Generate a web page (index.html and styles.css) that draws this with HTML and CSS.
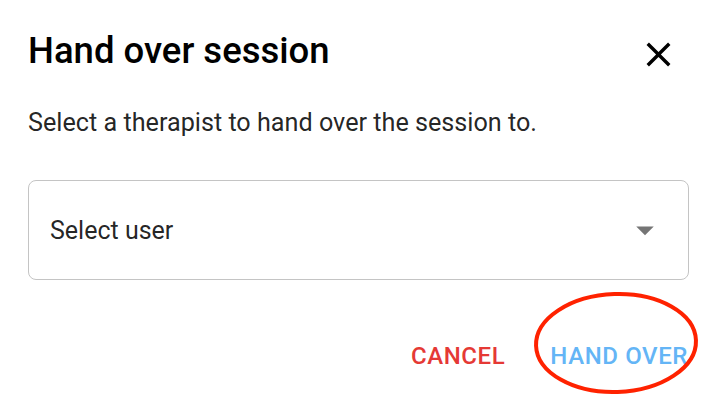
FILE: index.html
```html
<!DOCTYPE html>
<html lang="en">
<head>
    <meta charset="UTF-8">
    <meta name="viewport" content="width=device-width, initial-scale=1.0">
    <title>Hand over session</title>
    <link rel="stylesheet" href="styles.css">
</head>
<body>

    <div class="dialog">
        <!-- Title row -->
        <div class="dialog-header">
            <h2 class="dialog-title">Hand over session</h2>
            <button class="close-button" aria-label="Close">
                <svg width="41" height="41" viewBox="0 0 24 24">
                    <path d="M19 6.41 17.59 5 12 10.59 6.41 5 5 6.41 10.59 12 5 17.59 6.41 19 12 13.41 17.59 19 19 17.59 13.41 12z"/>
                </svg>
            </button>
        </div>

        <!-- Content -->
        <p class="dialog-text">Select a therapist to hand over the session to.</p>

        <div class="select-box">
            <span class="select-value">Select user</span>
            <svg class="select-arrow" width="42" height="42" viewBox="0 0 24 24">
                <path d="M7 10l5 5 5-5z"/>
            </svg>
        </div>

        <!-- Actions -->
        <div class="dialog-actions">
            <button class="text-button cancel">Cancel</button>
            <div class="action-wrap">
                <button class="text-button confirm">Hand over</button>
                <svg class="circle-mark" width="170" height="106" viewBox="0 0 170 106">
                    <ellipse cx="85" cy="53" rx="80" ry="49" transform="rotate(-2 85 53)"/>
                </svg>
            </div>
        </div>
    </div>

</body>
</html>
```

FILE: styles.css
```css
/* Global Styles */
html, body {
    height: 100%;
}

body {
    margin: 0;
    background-color: #ffffff;
    font-family: Roboto, "Noto Sans", Arial, sans-serif;
    color: rgba(0, 0, 0, 0.87);
}

.dialog {
    box-sizing: border-box;
    min-height: 100%;
    padding: 0 27px 0 28px;
}

/* Header */
.dialog-header {
    display: flex;
    justify-content: space-between;
    align-items: center;
    padding-top: 26px;
    height: 50px;
}

.dialog-title {
    margin: 0;
    font-size: 36.5px;
    font-weight: 500;
    line-height: 50px;
    color: #000000;
}

.close-button {
    display: flex;
    padding: 0;
    margin-right: 10px;
    margin-top: 6px;
    border: none;
    background: none;
    cursor: pointer;
}

.close-button svg {
    fill: #000000;
}

/* Content */
.dialog-text {
    margin: 31px 0 0;
    font-size: 25.2px;
    line-height: 32px;
}

.select-box {
    display: flex;
    align-items: center;
    justify-content: space-between;
    box-sizing: border-box;
    height: 100px;
    margin-top: 41px;
    padding: 0 22px 0 21px;
    border: 1px solid #c4c4c4;
    border-radius: 8px;
}

.select-value {
    font-size: 25px;
}

.select-arrow {
    fill: #757575;
}

/* Buttons */
.dialog-actions {
    display: flex;
    justify-content: flex-end;
    align-items: center;
    gap: 45px;
    margin-top: 61px;
    padding-right: 1px;
}

.text-button {
    padding: 0;
    border: none;
    background: none;
    font-family: inherit;
    font-size: 24px;
    font-weight: 500;
    line-height: 30px;
    letter-spacing: 0.6px;
    text-transform: uppercase;
    cursor: pointer;
}

.cancel {
    color: #e53935;
}

.confirm {
    color: #64b5f6;
}

.action-wrap {
    position: relative;
}

/* Red marker circle drawn over the confirm button */
.circle-mark {
    position: absolute;
    left: -19px;
    top: -51px;
    fill: none;
    stroke: #ff2200;
    stroke-width: 4;
    pointer-events: none;
}
```
